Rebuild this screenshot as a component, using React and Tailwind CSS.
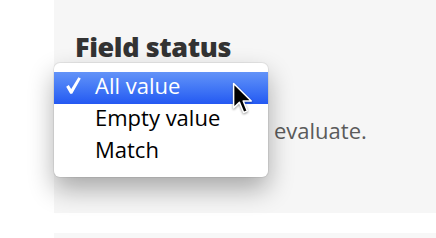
export default function App() {
  const items = ['All value', 'Empty value', 'Match']
  return (
    <div className="flex h-[238px] w-[436px] overflow-hidden bg-white" style={{ fontFamily: '"Open Sans", "DejaVu Sans", sans-serif' }}>
      <div className="w-[54px] shrink-0 bg-white" />
      <div className="flex flex-1 flex-col">
        <div className="relative h-[213px] bg-[#f6f6f6] pl-[21px] pt-[33px]">
          <h2 className="text-[27px] font-extrabold leading-[28px] tracking-[-0.4px] text-[#333]">Field status</h2>
          <p className="mt-[56px] whitespace-nowrap pl-[199px] text-[22px] leading-[26px] text-[#5b5b5b]">evaluate.</p>

          {/* popup menu */}
          <div className="absolute left-0 top-[63px] w-[214px] rounded-[6px] bg-white py-[9px] shadow-[0_12px_26px_rgba(0,0,0,0.32),0_0_0_1px_rgba(0,0,0,0.06)]">
            {items.map((name, i) => (
              <div key={name}
                className={`relative h-[32px] pl-[41px] text-[22px] font-medium leading-[26px] ${i === 0 ? 'bg-gradient-to-b from-[#6393f8] to-[#2458f2] text-white' : 'text-black'}`}>
                {i === 0 && (
                  <svg className="absolute left-[12px] top-[5px]" width="15" height="17" viewBox="0 0 15 17">
                    <path d="M0.2 9.8 L2.8 8 L5.2 12 L12.4 0.2 L14.8 1.4 L6.2 16.8 L4.2 16.8 Z" fill="white" />
                  </svg>
                )}
                {name}
              </div>
            ))}
          </div>

          {/* mouse pointer */}
          <svg className="absolute left-[178px] top-[82px] drop-shadow-[0_1px_1px_rgba(0,0,0,0.4)]" width="23" height="35" viewBox="0 0 15 23">
            <path d="M1 1 L1 17 L4.8 13.4 L7.6 20 L10 19 L7.3 12.5 L12.6 12.5 Z" fill="black" stroke="white" strokeWidth="1" strokeLinejoin="round" />
          </svg>
        </div>
        <div className="h-[20px] bg-white" />
        <div className="flex-1 bg-[#f7f7f7]" />
      </div>
    </div>
  )
}
